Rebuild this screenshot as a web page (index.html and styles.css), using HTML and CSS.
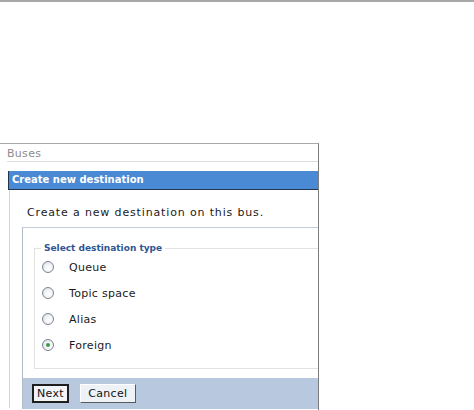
FILE: index.html
```html
<!DOCTYPE html>
<html lang="en">
<head>
<meta charset="utf-8">
<title>Create new destination</title>
<link rel="stylesheet" href="styles.css">
</head>
<body>
<div class="top-rule"></div>
<div class="panel">
  <div class="panel-title">Buses</div>
  <div class="portlet">
    <div class="portlet-header">Create new destination</div>
    <div class="portlet-body">
      <p class="intro">Create a new destination on this bus.</p>
      <div class="box">
        <fieldset class="types">
          <legend>Select destination type</legend>
          <label class="option"><span class="radio"></span><span class="label">Queue</span></label>
          <label class="option"><span class="radio"></span><span class="label">Topic space</span></label>
          <label class="option"><span class="radio"></span><span class="label">Alias</span></label>
          <label class="option"><span class="radio checked"></span><span class="label">Foreign</span></label>
        </fieldset>
        <div class="button-bar">
          <button class="btn btn-default">Next</button>
          <button class="btn">Cancel</button>
        </div>
      </div>
    </div>
  </div>
</div>
</body>
</html>
```

FILE: styles.css
```css
html, body {
  margin: 0;
  padding: 0;
  background: #ffffff;
  font-family: "DejaVu Sans", Verdana, sans-serif;
  font-size: 11px;
  color: #1a1a1a;
}

.top-rule {
  height: 2px;
  background: #a8a8a8;
}

.panel {
  margin-top: 141px;
  width: 318px;
  border-top: 1px solid #a8a8a8;
  border-right: 1px solid #7c7c7c;
  height: 270px;
}

.panel-title {
  margin-left: 7px;
  height: 17px;
  line-height: 19px;
  color: #8c8c8c;
  border-bottom: 1px solid #dcdcdc;
  letter-spacing: 0.3px;
}

.portlet {
  margin-top: 9px;
  margin-left: 8px;
}

.portlet-header {
  height: 18px;
  line-height: 18px;
  background: #4a89d3;
  border-left: 1px solid #23364f;
  border-bottom: 1px solid #23364f;
  color: #ffffff;
  font-weight: bold;
  font-size: 10px;
  padding-left: 3px;
  letter-spacing: 0;
}

.portlet-body {
  margin-left: 1px;
  border-left: 1px solid #d4d4d4;
  padding-top: 16px;
  height: 202px;
}

.intro {
  margin: 0 0 7px 17px;
  line-height: 14px;
  letter-spacing: 0.85px;
}

.box {
  margin-left: 12px;
  border-top: 1px solid #c4ccdc;
  border-left: 1px solid #b4bccc;
  padding-top: 14px;
}

.types {
  margin: 0 0 9px 11px;
  padding: 0 0 10px 7px;
  border: 1px solid #e2e2e2;
  border-right: none;
}

.types legend {
  padding: 0 3px;
  margin-left: -1px;
  color: #2e5592;
  font-weight: bold;
  font-size: 9px;
  line-height: 12px;
  letter-spacing: 0;
}

.option {
  display: flex;
  align-items: center;
  height: 26px;
}

.radio {
  width: 12px;
  height: 12px;
  box-sizing: border-box;
  border-radius: 50%;
  border: 1px solid #7d8593;
  background: radial-gradient(circle at 60% 60%, #ffffff 0%, #f2f3f6 45%, #cfd3dc 100%);
  display: flex;
  align-items: center;
  justify-content: center;
}

.radio.checked::after {
  content: "";
  width: 4px;
  height: 4px;
  border-radius: 50%;
  background: #3c9a4c;
}

.label {
  margin-left: 15px;
  letter-spacing: 0.3px;
}

.button-bar {
  background: #b8c8df;
  height: 31px;
  display: flex;
  align-items: center;
  gap: 11px;
  padding-left: 9px;
}

.btn {
  font-family: "DejaVu Sans", Verdana, sans-serif;
  font-size: 11px;
  height: 19px;
  padding: 0 3px;
  margin: 0;
  background: #eef1f6;
  color: #111111;
  border: 1px solid;
  border-color: #ffffff #5a5a5a #5a5a5a #ffffff;
  letter-spacing: 0.3px;
  line-height: 15px;
}

.btn-default {
  border: 2px solid #1e1e1e;
  background: #f2f4f7;
  padding: 0 3px;
}

.btn:not(.btn-default) {
  width: 56px;
}
```
